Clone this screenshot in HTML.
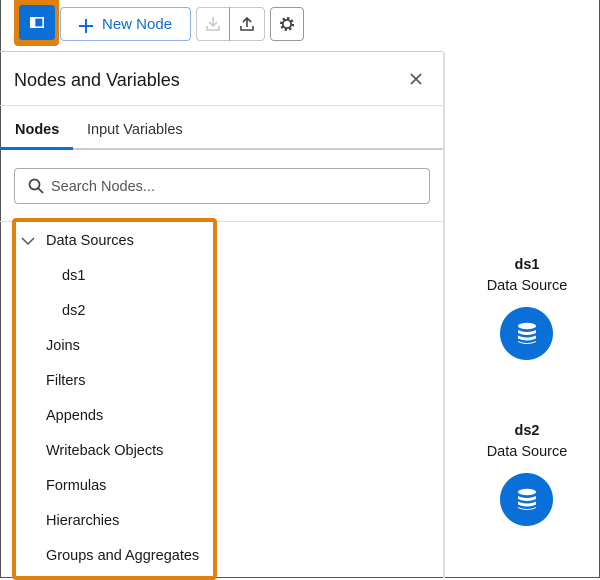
<!DOCTYPE html>
<html><head><style>
*{box-sizing:border-box;margin:0;padding:0}
body{width:600px;height:578px;background:#fff;font-family:"Liberation Sans",sans-serif;color:#181818;position:relative;overflow:hidden}
.abs{position:absolute}
.outer{left:0;top:0;width:600px;height:578px;border:1px solid #555;border-top:none}
.btn{position:absolute;border:1px solid #c9c9c9;border-radius:4px;background:#fff}
.item{position:absolute;left:46px;font-size:14.5px;color:#181818}
</style></head><body>
<div class="abs outer"></div>
<div class="abs" style="left:0;top:51px;width:443px;height:1px;background:#c9c9c9"></div>
<div class="abs" style="left:14px;top:0;width:45px;height:46px;background:#e0800e;border-radius:0 0 4px 4px"></div>
<div class="abs" style="left:19px;top:5px;width:36px;height:35px;background:#0b6fd8;border-radius:3px"></div>
<svg class="abs" style="left:30px;top:17px" width="14" height="11" viewBox="0 0 14 11"><rect x="0.8" y="0.8" width="12.4" height="9.4" fill="none" stroke="#fff" stroke-width="1.6"/><rect x="0.8" y="0.8" width="4.5" height="9.4" fill="#fff"/></svg>
<div class="btn" style="left:60px;top:7px;width:131px;height:34px;border-color:#8ab4ea"></div>
<svg class="abs" style="left:78px;top:18px" width="16" height="16"><path d="M8 1V15M1 8H15" stroke="#0b6fd8" stroke-width="2"/></svg>
<div class="abs" style="left:102px;top:16px;font-size:15px;color:#0b6fd8">New Node</div>
<div class="btn" style="left:196px;top:7px;width:69px;height:34px"></div>
<div class="abs" style="left:229px;top:7px;width:1px;height:34px;background:#999"></div>
<svg class="abs" style="left:204px;top:15px" width="18" height="18" viewBox="0 0 18 18" fill="none" stroke="#c9c9c9" stroke-width="1.6"><path d="M9 2V11M5 7L9 11L13 7M3 11V15H15V11"/></svg>
<svg class="abs" style="left:238px;top:15px" width="18" height="18" viewBox="0 0 18 18" fill="none" stroke="#444" stroke-width="1.6"><path d="M9 12V3M5 7L9 3L13 7M3 11V15H15V11"/></svg>
<div class="btn" style="left:270px;top:7px;width:34px;height:34px;border-color:#999"></div>
<svg class="abs" style="left:279px;top:16px" width="16" height="16" viewBox="0 0 16 16"><circle cx="8" cy="8" r="5.5" fill="none" stroke="#444" stroke-width="3" stroke-dasharray="2.2 2.1"/><circle cx="8" cy="8" r="4.2" fill="none" stroke="#444" stroke-width="1.8"/></svg>
<div class="abs" style="left:443px;top:52px;width:2px;height:526px;background:#ddd"></div>
<div class="abs" style="left:14px;top:70px;font-size:18px">Nodes and Variables</div>
<svg class="abs" style="left:410px;top:73px" width="12" height="12"><path d="M1 1L11 11M11 1L1 11" stroke="#555" stroke-width="1.6"/></svg>
<div class="abs" style="left:0;top:105px;width:443px;height:1px;background:#ddd"></div>
<div class="abs" style="left:15px;top:122px;font-size:14.5px;font-weight:bold">Nodes</div>
<div class="abs" style="left:87px;top:122px;font-size:14.5px;color:#333">Input Variables</div>
<div class="abs" style="left:0;top:148px;width:443px;height:2px;background:#ccc"></div>
<div class="abs" style="left:0;top:147px;width:73px;height:3px;background:#0b6fd8"></div>
<div class="abs" style="left:14px;top:168px;width:416px;height:36px;border:1px solid #aaa;border-radius:4px"></div>
<svg class="abs" style="left:28px;top:178px" width="16" height="16"><circle cx="6.5" cy="6.5" r="5" fill="none" stroke="#444" stroke-width="1.7"/><path d="M10 10L15 15" stroke="#444" stroke-width="1.8"/></svg>
<div class="abs" style="left:51px;top:179px;font-size:14.5px;color:#555">Search Nodes...</div>
<div class="abs" style="left:0;top:221px;width:443px;height:1px;background:#ddd"></div>
<div class="abs" style="left:12px;top:218px;width:205px;height:362px;border:4px solid #e0800e;border-radius:4px"></div>
<svg class="abs" style="left:21px;top:236px" width="14" height="10"><path d="M1 2L7 8L13 2" fill="none" stroke="#555" stroke-width="1.5"/></svg>
<div class="item" style="top:233px">Data Sources</div>
<div class="item" style="top:268px;left:62px">ds1</div>
<div class="item" style="top:303px;left:62px">ds2</div>
<div class="item" style="top:338px">Joins</div>
<div class="item" style="top:373px">Filters</div>
<div class="item" style="top:408px">Appends</div>
<div class="item" style="top:443px">Writeback Objects</div>
<div class="item" style="top:478px">Formulas</div>
<div class="item" style="top:513px">Hierarchies</div>
<div class="item" style="top:548px">Groups and Aggregates</div>
<div class="abs" style="left:447px;top:257px;width:160px;text-align:center;font-size:14.5px;font-weight:bold">ds1</div>
<div class="abs" style="left:447px;top:278px;width:160px;text-align:center;font-size:14.5px">Data Source</div>
<div class="abs" style="left:500px;top:307px;width:53px;height:53px;border-radius:50%;background:#0b6fd8"></div>
<svg class="abs" style="left:516px;top:322px" width="22" height="24" viewBox="0 0 22 24" fill="#fff"><ellipse cx="11" cy="4" rx="9" ry="3.2"/><path d="M2 8Q11 12 20 8V11Q11 15 2 11Z"/><path d="M2 13.5Q11 17.5 20 13.5V16.5Q11 20.5 2 16.5Z"/><path d="M2 19Q11 23 20 19V20Q11 24 2 20Z"/></svg>
<div class="abs" style="left:447px;top:423px;width:160px;text-align:center;font-size:14.5px;font-weight:bold">ds2</div>
<div class="abs" style="left:447px;top:444px;width:160px;text-align:center;font-size:14.5px">Data Source</div>
<div class="abs" style="left:500px;top:473px;width:53px;height:53px;border-radius:50%;background:#0b6fd8"></div>
<svg class="abs" style="left:516px;top:488px" width="22" height="24" viewBox="0 0 22 24" fill="#fff"><ellipse cx="11" cy="4" rx="9" ry="3.2"/><path d="M2 8Q11 12 20 8V11Q11 15 2 11Z"/><path d="M2 13.5Q11 17.5 20 13.5V16.5Q11 20.5 2 16.5Z"/><path d="M2 19Q11 23 20 19V20Q11 24 2 20Z"/></svg>
</body></html>
